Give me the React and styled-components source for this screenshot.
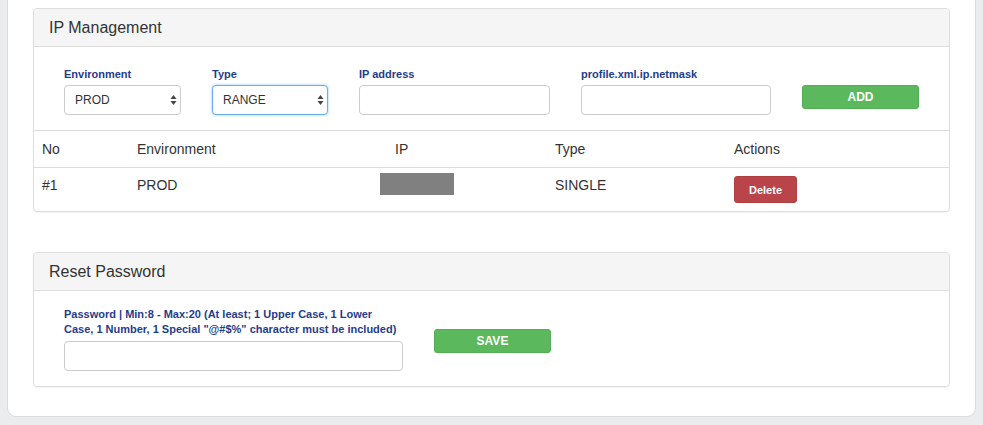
import React from "react"
import styled, { createGlobalStyle } from "styled-components"

const GlobalStyle = createGlobalStyle`
  html, body {
    margin: 0;
    padding: 0;
    background: #ebeced;
    font-family: "Liberation Sans", Arial, sans-serif;
    color: #333;
  }
`

const Page = styled.div`
  padding: 0 7px 8px 7px;
`

const Card = styled.div`
  background: #fff;
  border: 1px solid #dcdcdc;
  border-top: none;
  border-radius: 0 0 9px 9px;
  padding: 8px 25px 29px 25px;
  display: flex;
  flex-direction: column;
  gap: 40px;
`

const Panel = styled.section`
  border: 1px solid #ddd;
  border-radius: 4px;
  box-shadow: 0 1px 1px rgba(0, 0, 0, 0.05);
  overflow: hidden;
`

const PanelHeading = styled.h3`
  margin: 0;
  height: 37px;
  line-height: 37px;
  padding: 0 15px;
  background: #f5f5f5;
  border-bottom: 1px solid #ddd;
  font-size: 16px;
  font-weight: normal;
  color: #333;
`

const FormRow = styled.div`
  display: flex;
  align-items: flex-start;
  gap: 31px;
  padding: ${p => p.$pad || "20px 30px 15px 30px"};
`

const Field = styled.div`
  display: flex;
  flex-direction: column;
  width: ${p => p.$w}px;
`

const Label = styled.label`
  font-size: 11px;
  font-weight: bold;
  color: #1f3d8c;
  line-height: 15px;
  margin-bottom: 4px;
  height: ${p => (p.$tall ? "auto" : "14px")};
`

const SelectWrap = styled.div`
  position: relative;
`

const Select = styled.select`
  appearance: none;
  -webkit-appearance: none;
  width: 100%;
  height: 30px;
  box-sizing: border-box;
  border: 1px solid ${p => (p.$focus ? "#66afe9" : "#ccc")};
  box-shadow: ${p => (p.$focus ? "0 0 3px rgba(102,175,233,0.7)" : "none")};
  border-radius: 4px;
  background: #fff;
  padding: 0 10px;
  font-family: inherit;
  font-size: 12px;
  color: #333;
  outline: none;
`

const Arrows = styled.svg`
  position: absolute;
  right: 4px;
  top: 10px;
  pointer-events: none;
`

const Input = styled.input`
  width: 100%;
  height: ${p => p.$h || 30}px;
  box-sizing: border-box;
  border: 1px solid #ccc;
  border-radius: 4px;
  padding: 0 10px;
  font-family: inherit;
  font-size: 12px;
  outline: none;
`

const Button = styled.button`
  width: ${p => p.$w || 117}px;
  height: ${p => p.$h || 24}px;
  margin-top: ${p => p.$mt || 0}px;
  border-radius: 3px;
  border: 1px solid ${p => (p.$danger ? "#b0403d" : "#52b052")};
  background: ${p => (p.$danger ? "#b9454a" : "#5cb85c")};
  color: #fff;
  font-family: inherit;
  font-weight: bold;
  font-size: ${p => (p.$danger ? "11px" : "12px")};
  padding: 0;
  flex: none;
`

const Table = styled.div`
  border-top: 1px solid #ddd;
`

const Row = styled.div`
  display: grid;
  grid-template-columns: 95px 243px 175px 179px 1fr;
  height: ${p => p.$h}px;
  border-top: ${p => (p.$first ? "none" : "1px solid #ddd")};
  box-sizing: border-box;
`

const Th = styled.div`
  font-size: 14px;
  line-height: 20px;
  padding: 8px 8px 0 ${p => p.$pl || 8}px;
`

const Td = styled.div`
  font-size: 14px;
  line-height: 20px;
  padding: ${p => p.$pt || 7}px 8px 0 8px;
`

const Masked = styled.div`
  width: 74px;
  height: 22px;
  background: #808080;
`

const Chevrons = () => (
  <Arrows width="7" height="10" viewBox="0 0 7 10">
    <path d="M3.5 0 L6.5 4 H0.5 Z" fill="#444" />
    <path d="M3.5 10 L6.5 6 H0.5 Z" fill="#444" />
  </Arrows>
)

export default function App() {
  return (
    <Page>
      <GlobalStyle />
      <Card>
        <Panel>
          <PanelHeading>IP Management</PanelHeading>
          <FormRow>
            <Field $w={117}>
              <Label>Environment</Label>
              <SelectWrap>
                <Select defaultValue="PROD">
                  <option>PROD</option>
                </Select>
                <Chevrons />
              </SelectWrap>
            </Field>
            <Field $w={116}>
              <Label>Type</Label>
              <SelectWrap>
                <Select $focus defaultValue="RANGE">
                  <option>RANGE</option>
                </Select>
                <Chevrons />
              </SelectWrap>
            </Field>
            <Field $w={191}>
              <Label>IP address</Label>
              <Input />
            </Field>
            <Field $w={190}>
              <Label>profile.xml.ip.netmask</Label>
              <Input />
            </Field>
            <Button $mt={18}>ADD</Button>
          </FormRow>
          <Table>
            <Row $first $h={36}>
              <Th>No</Th>
              <Th>Environment</Th>
              <Th $pl={23}>IP</Th>
              <Th>Type</Th>
              <Th>Actions</Th>
            </Row>
            <Row $h={44}>
              <Td>#1</Td>
              <Td>PROD</Td>
              <Td $pt={5}>
                <Masked />
              </Td>
              <Td>SINGLE</Td>
              <Td $pt={8}>
                <Button $danger $w={63} $h={27}>Delete</Button>
              </Td>
            </Row>
          </Table>
        </Panel>
        <Panel>
          <PanelHeading>Reset Password</PanelHeading>
          <FormRow $pad="16px 30px 15px 30px">
            <Field $w={339}>
              <Label $tall>
                Password | Min:8 - Max:20 (At least; 1 Upper Case, 1 Lower Case, 1 Number, 1 Special "@#$%" character must be included)
              </Label>
              <Input $h={30} />
            </Field>
            <Button $mt={22}>SAVE</Button>
          </FormRow>
        </Panel>
      </Card>
    </Page>
  )
}
